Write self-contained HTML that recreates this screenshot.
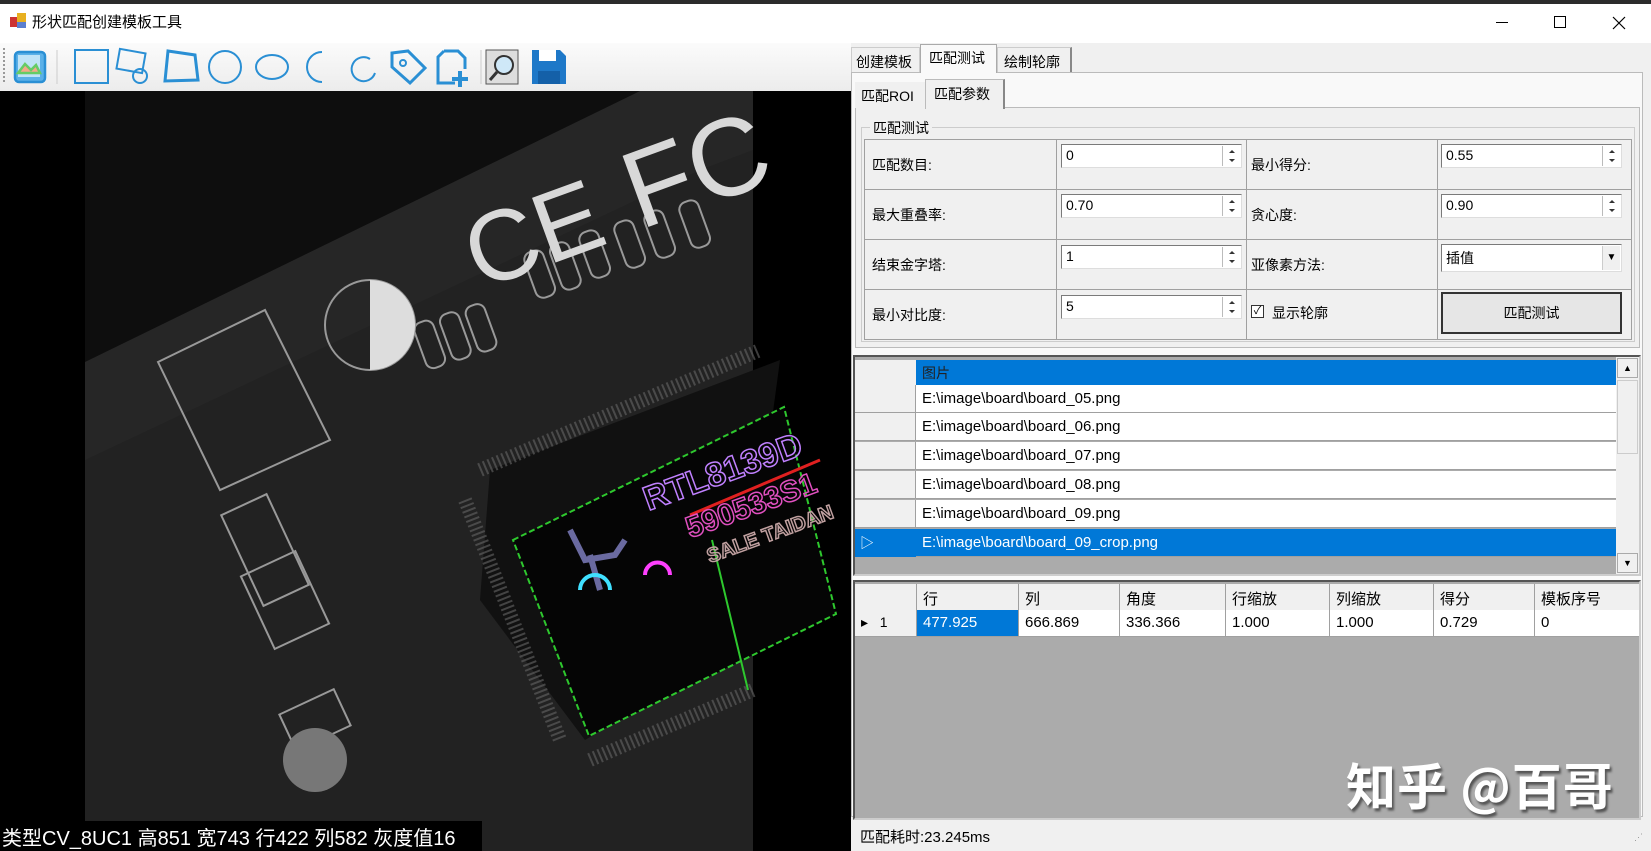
<!DOCTYPE html>
<html><head><meta charset="utf-8"><style>
*{margin:0;padding:0;box-sizing:border-box}
body{width:1651px;height:851px;overflow:hidden;background:#f0f0f0;font-family:"Liberation Sans","Noto Sans CJK SC",sans-serif;font-size:14px;color:#000;position:relative}
.a{position:absolute;white-space:nowrap}
.cell{position:absolute;border:1px solid #a0a0a0;background:#f0f0f0}
.lbl{position:absolute;font-size:14px}
.inp{position:absolute;background:#fff;border:1px solid #7a7a7a;border-right-color:#ddd;border-bottom-color:#ddd;height:24px;font-size:14px;padding:2px 4px}
.spin{position:absolute;right:1px;top:1px;width:18px;height:20px;border-left:1px solid #bbb}
.spin:before,.spin:after{content:"";position:absolute;left:6px;border-left:3px solid transparent;border-right:3px solid transparent}
.spin:before{top:4px;border-bottom:3px solid #333}
.spin:after{bottom:4px;border-top:3px solid #333}
.row{position:absolute;left:916px;width:700px;height:28px;background:#fff;border-bottom:1px solid #a0a0a0;padding:5px 6px;font-size:15px}
.rh{position:absolute;left:855px;width:61px;height:28px;background:#f0f0f0;border-bottom:1px solid #a0a0a0;border-right:1px solid #a0a0a0}
.h2{position:absolute;top:584px;height:26px;border-right:1px solid #a0a0a0;padding:4px 6px;font-size:15px;background:#f0f0f0}
.d2{position:absolute;top:610px;height:27px;border-right:1px solid #a0a0a0;padding:4px 6px;font-size:15px;background:#fff;border-bottom:1px solid #a0a0a0}
.tab{font-size:14px;white-space:nowrap;overflow:hidden}
</style></head><body>
<div class="a" style="left:0;top:0;width:1651px;height:4px;background:#2b2b2b"></div>
<div class="a" style="left:0;top:4px;width:1651px;height:39px;background:#fff"></div>
<div class="a" style="left:10px;top:13px;width:16px;height:16px">
 <div class="a" style="left:0;top:4px;width:8px;height:10px;background:#c33"></div>
 <div class="a" style="left:7px;top:0;width:9px;height:9px;background:#e8b020"></div>
 <div class="a" style="left:7px;top:9px;width:9px;height:6px;background:#5b7fd0"></div>
</div>
<div class="a" style="left:32px;top:11px;font-size:15px">形状匹配创建模板工具</div>
<div class="a" style="left:1496px;top:22px;width:12px;height:1px;background:#000"></div>
<div class="a" style="left:1554px;top:16px;width:12px;height:12px;border:1px solid #000"></div>
<svg class="a" style="left:1612px;top:16px" width="14" height="14"><path d="M1 1L13 13M13 1L1 13" stroke="#000" stroke-width="1.2"/></svg>

<div class="a" style="left:0;top:43px;width:851px;height:48px;background:linear-gradient(#fbfbfb,#ececec)"></div>
<div class="a" style="left:3px;top:48px;width:2px;height:34px;border-left:2px dotted #999"></div>
<svg class="a" style="left:0;top:43px" width="851" height="48" viewBox="0 0 851 48">
 <g fill="none" stroke="#2a8fd4" stroke-width="2.5">
  <rect x="15" y="9" width="30" height="30" rx="4" fill="#5ab0e8"/>
  <rect x="18" y="12" width="22" height="22" fill="#bfe3f7" stroke="none"/>
  <path d="M18 30 L25 21 L31 27 L36 22 L40 30 Z" fill="#f5a88a" stroke="#6c6"/>
 </g>
 <line x1="57" y1="7" x2="57" y2="41" stroke="#ccc"/>
 <g fill="none" stroke="#2a8fd4" stroke-width="2">
  <rect x="75" y="7" width="33" height="33"/>
  <rect x="118" y="8" width="26" height="20" transform="rotate(10 131 18)"/>
  <circle cx="140" cy="33" r="7"/>
  <path d="M168 8 L195 12 L198 37 L165 38 Z" stroke-width="3"/>
  <circle cx="225" cy="24" r="16"/>
  <ellipse cx="272" cy="24" rx="16" ry="12"/>
  <path d="M322 9 A15 15 0 1 0 322 39"/>
  <path d="M370 16 A12 12 0 1 0 375 30"/>
  <path d="M392 10 L408 8 L425 25 L410 40 L392 24 Z" stroke-width="3"/>
  <circle cx="403" cy="20" r="3"/>
  <path d="M444 8 L458 8 L465 15 L465 26 M444 8 L438 14 L438 40 L455 40" stroke-width="3"/>
  <path d="M460 28 L460 44 M452 36 L468 36" stroke-width="4"/>
 </g>
 <line x1="481" y1="7" x2="481" y2="41" stroke="#ccc"/>
 <rect x="486" y="7" width="32" height="34" fill="#ddd" stroke="#555"/>
 <circle cx="504" cy="22" r="9" fill="#cfe8f8" stroke="#333" stroke-width="2"/>
 <line x1="497" y1="29" x2="490" y2="37" stroke="#333" stroke-width="3"/>
 <path d="M532 7 L560 7 L566 13 L566 41 L532 41 Z" fill="#1e78c8"/>
 <rect x="539" y="7" width="17" height="11" fill="#fff"/>
 <rect x="538" y="28" width="22" height="13" fill="#1460a8"/>
</svg>

<svg class="a" style="left:0;top:91px" width="851" height="760" viewBox="0 91 851 760">
 <rect x="0" y="91" width="851" height="760" fill="#000"/>
 <rect x="85" y="91" width="668" height="760" fill="#0e0e0e"/>
 <polygon points="85,362 640,91 753,91 753,851 85,851" fill="#262626"/>
 <polygon points="85,460 700,170 753,150 753,851 85,851" fill="#222"/>
 <g fill="none" stroke="#999" stroke-width="2">
  <polygon points="158,362 265,310 330,440 220,490" />
  <circle cx="370" cy="325" r="45"/>
  <rect x="255" y="560" width="60" height="80" transform="rotate(-25 285 600)"/>
  <rect x="420" y="320" width="20" height="48" rx="8" transform="rotate(-20 431 345)"/>
  <rect x="445" y="312" width="20" height="48" rx="8" transform="rotate(-20 455 335)"/>
  <rect x="470" y="304" width="20" height="48" rx="8" transform="rotate(-20 480 325)"/>
  <rect x="530" y="250" width="20" height="48" rx="8" transform="rotate(-20 540 275)"/>
  <rect x="555" y="242" width="20" height="48" rx="8" transform="rotate(-20 565 265)"/>
  <rect x="585" y="230" width="20" height="48" rx="8" transform="rotate(-20 595 255)"/>
  <rect x="620" y="220" width="20" height="48" rx="8" transform="rotate(-20 630 245)"/>
  <rect x="650" y="210" width="20" height="48" rx="8" transform="rotate(-20 660 235)"/>
  <rect x="685" y="200" width="20" height="48" rx="8" transform="rotate(-20 695 225)"/>
  <rect x="285" y="700" width="60" height="40" transform="rotate(-25 315 720)"/>
  <rect x="240" y="500" width="50" height="100" transform="rotate(-25 265 550)"/>
 </g>
 <path d="M370 280 A45 45 0 0 1 370 370 Z" fill="#ddd"/>
 <circle cx="315" cy="760" r="32" fill="#777"/>
 <text x="480" y="290" font-size="100" fill="#d8d8d8" font-family="Liberation Sans" transform="rotate(-20 480 290)">CE</text>
 <text x="640" y="230" font-size="110" fill="#d8d8d8" font-family="Liberation Sans" transform="rotate(-20 640 230)">FC</text>
 <polygon points="490,470 780,360 753,560 753,640 585,740 480,600" fill="#111"/>
 <g stroke="#666" stroke-width="2">
  <path d="M480 470 L760 350" stroke-dasharray="2 3" stroke-width="14" opacity=".6"/>
  <path d="M590 760 L753 690" stroke-dasharray="2 3" stroke-width="14" opacity=".6"/>
  <path d="M465 500 L560 740" stroke-dasharray="2 3" stroke-width="14" opacity=".6"/>
 </g>
 <polygon points="513,540 784,407 836,614 589,736" fill="#050505" stroke="#2ec82e" stroke-width="2" stroke-dasharray="6 3"/>
 <line x1="690" y1="515" x2="820" y2="460" stroke="#e02020" stroke-width="3"/>
 <line x1="712" y1="540" x2="748" y2="690" stroke="#2ec82e" stroke-width="2"/>
 <g font-family="Liberation Sans" font-weight="bold" transform="rotate(-20 680 510)">
  <text x="650" y="500" font-size="34" fill="none" stroke="#c080ff" stroke-width="1.5">RTL8139D</text>
  <text x="680" y="540" font-size="30" fill="none" stroke="#e050c0" stroke-width="1.5">590533S1</text>
  <text x="690" y="570" font-size="20" fill="none" stroke="#c0a0a0" stroke-width="1.5">SALE TAIDAN</text>
 </g>
 <path d="M570 530 L585 560 L615 555 L625 540 M590 555 L600 590" stroke="#6a6aa0" stroke-width="6" fill="none"/>
 <path d="M580 590 A15 15 0 0 1 610 590" stroke="#40e0ff" stroke-width="4" fill="none"/>
 <path d="M645 575 A12 12 0 0 1 670 575" stroke="#ff40ff" stroke-width="4" fill="none"/>
 <rect x="0" y="821" width="482" height="30" fill="#000"/>
 <text x="2" y="845" font-size="20" fill="#fff" font-family="Liberation Sans, Noto Sans CJK SC, sans-serif">类型CV_8UC1 高851 宽743 行422 列582 灰度值16</text>
</svg>

<div class="a" style="left:851px;top:43px;width:800px;height:808px;background:#f0f0f0"></div>
<div class="a" style="left:851px;top:72px;width:792px;height:745px;border:1px solid #bbb;background:#f9f9f9"></div>
<div class="a tab" style="left:851px;top:47px;width:69px;height:25px;border:1px solid #ccc;border-bottom:none;background:#f0f0f0;padding:4px 4px">创建模板</div>
<div class="a tab" style="left:920px;top:44px;width:77px;height:29px;border:1px solid #aaa;border-bottom:none;background:#f9f9f9;padding:3px 8px">匹配测试</div>
<div class="a tab" style="left:997px;top:47px;width:75px;height:25px;border:1px solid #ccc;border-right:2px solid #888;border-bottom:none;background:#f0f0f0;padding:4px 6px">绘制轮廓</div>

<div class="a" style="left:855px;top:107px;width:785px;height:241px;border:1px solid #bbb;background:#f0f0f0"></div>
<div class="a tab" style="left:855px;top:82px;width:70px;height:26px;background:#f0f0f0;padding:4px 6px">匹配ROI</div>
<div class="a tab" style="left:925px;top:79px;width:80px;height:30px;border:1px solid #bbb;border-right:2px solid #888;border-bottom:none;background:#f0f0f0;padding:4px 8px">匹配参数</div>

<div class="a" style="left:861px;top:127px;width:774px;height:215px;border:1px solid #ccc"></div>
<div class="a" style="left:870px;top:118px;background:#f0f0f0;padding:0 3px;font-size:14px">匹配测试</div>
<div class="cell" style="left:864px;top:139px;width:193px;height:51px"></div>
<div class="cell" style="left:1056px;top:139px;width:191px;height:51px"></div>
<div class="cell" style="left:1246px;top:139px;width:192px;height:51px"></div>
<div class="cell" style="left:1437px;top:139px;width:195px;height:51px"></div>
<div class="cell" style="left:864px;top:189px;width:193px;height:51px"></div>
<div class="cell" style="left:1056px;top:189px;width:191px;height:51px"></div>
<div class="cell" style="left:1246px;top:189px;width:192px;height:51px"></div>
<div class="cell" style="left:1437px;top:189px;width:195px;height:51px"></div>
<div class="cell" style="left:864px;top:239px;width:193px;height:51px"></div>
<div class="cell" style="left:1056px;top:239px;width:191px;height:51px"></div>
<div class="cell" style="left:1246px;top:239px;width:192px;height:51px"></div>
<div class="cell" style="left:1437px;top:239px;width:195px;height:51px"></div>
<div class="cell" style="left:864px;top:289px;width:193px;height:51px"></div>
<div class="cell" style="left:1056px;top:289px;width:191px;height:51px"></div>
<div class="cell" style="left:1246px;top:289px;width:192px;height:51px"></div>
<div class="cell" style="left:1437px;top:289px;width:195px;height:51px"></div>
<div class="lbl" style="left:872px;top:155px">匹配数目:</div>
<div class="lbl" style="left:872px;top:205px">最大重叠率:</div>
<div class="lbl" style="left:872px;top:255px">结束金字塔:</div>
<div class="lbl" style="left:872px;top:305px">最小对比度:</div>
<div class="lbl" style="left:1251px;top:155px">最小得分:</div>
<div class="lbl" style="left:1251px;top:205px">贪心度:</div>
<div class="lbl" style="left:1251px;top:255px">亚像素方法:</div>
<div class="a" style="left:1251px;top:305px;width:13px;height:13px;border:1px solid #333;background:#fff;font-size:11px;line-height:11px;text-align:center">✓</div>
<div class="lbl" style="left:1272px;top:303px">显示轮廓</div>
<div class="inp" style="left:1061px;top:144px;width:181px">0<div class="spin"></div></div>
<div class="inp" style="left:1061px;top:194px;width:181px">0.70<div class="spin"></div></div>
<div class="inp" style="left:1061px;top:245px;width:181px">1<div class="spin"></div></div>
<div class="inp" style="left:1061px;top:295px;width:181px">5<div class="spin"></div></div>
<div class="inp" style="left:1441px;top:144px;width:181px">0.55<div class="spin"></div></div>
<div class="inp" style="left:1441px;top:194px;width:181px">0.90<div class="spin"></div></div>
<div class="inp" style="left:1441px;top:244px;width:181px;height:28px;padding-top:3px">插值<div class="a" style="right:1px;top:1px;width:18px;height:24px;background:#f0f0f0;border-left:1px solid #ccc;font-size:10px;text-align:center;line-height:24px">▼</div></div>
<div class="a" style="left:1441px;top:292px;width:181px;height:42px;border:2px solid #333;background:#e6e6e6;text-align:center;line-height:38px;font-size:14px">匹配测试</div>

<div class="a" style="left:853px;top:355px;width:788px;height:221px;border:2px solid #555;border-right-color:#ccc;border-bottom-color:#ccc;background:#ababab"></div>
<div class="a" style="left:855px;top:360px;width:61px;height:25px;background:#f0f0f0"></div>
<div class="a" style="left:916px;top:360px;width:700px;height:25px;background:#0078d7;padding:3px 6px;font-size:14px;color:#222">图片</div>
<div class="rh" style="top:385px"></div><div class="row" style="top:385px">E:\image\board\board_05.png</div>
<div class="rh" style="top:413px"></div><div class="row" style="top:413px">E:\image\board\board_06.png</div>
<div class="rh" style="top:442px"></div><div class="row" style="top:442px">E:\image\board\board_07.png</div>
<div class="rh" style="top:471px"></div><div class="row" style="top:471px">E:\image\board\board_08.png</div>
<div class="rh" style="top:500px"></div><div class="row" style="top:500px">E:\image\board\board_09.png</div>
<div class="a" style="left:855px;top:529px;width:61px;height:28px;background:#0078d7;color:#fff;padding:4px 5px;font-size:14px">▷</div>
<div class="row" style="top:529px;background:#0078d7;color:#fff">E:\image\board\board_09_crop.png</div>
<div class="a" style="left:1616px;top:357px;width:23px;height:217px;background:#f0f0f0"></div>
<div class="a" style="left:1617px;top:358px;width:21px;height:20px;background:#f0f0f0;border:1px solid #aaa;font-size:9px;text-align:center;line-height:18px">▲</div>
<div class="a" style="left:1617px;top:380px;width:21px;height:74px;background:#f0f0f0;border:1px solid #ccc"></div>
<div class="a" style="left:1617px;top:553px;width:21px;height:20px;background:#f0f0f0;border:1px solid #aaa;font-size:9px;text-align:center;line-height:18px">▼</div>

<div class="a" style="left:853px;top:580px;width:788px;height:240px;border:2px solid #555;border-right-color:#ccc;border-bottom-color:#ccc;background:#ababab"></div>
<div class="h2" style="left:855px;width:62px"></div>
<div class="h2" style="left:917px;width:102px">行</div>
<div class="h2" style="left:1019px;width:101px">列</div>
<div class="h2" style="left:1120px;width:106px">角度</div>
<div class="h2" style="left:1226px;width:104px">行缩放</div>
<div class="h2" style="left:1330px;width:104px">列缩放</div>
<div class="h2" style="left:1434px;width:101px">得分</div>
<div class="h2" style="left:1535px;width:104px;border-right:none">模板序号</div>
<div class="d2" style="left:855px;width:62px;background:#f0f0f0;font-size:14px">▸&nbsp;&nbsp;&nbsp;1</div>
<div class="d2" style="left:917px;width:102px;background:#0078d7;color:#fff">477.925</div>
<div class="d2" style="left:1019px;width:101px">666.869</div>
<div class="d2" style="left:1120px;width:106px">336.366</div>
<div class="d2" style="left:1226px;width:104px">1.000</div>
<div class="d2" style="left:1330px;width:104px">1.000</div>
<div class="d2" style="left:1434px;width:101px">0.729</div>
<div class="d2" style="left:1535px;width:104px;border-right:none">0</div>
<div class="a" style="left:1346px;top:748px;font-size:50px;font-weight:bold;color:#fff;text-shadow:2px 3px 2px #555;font-family:'Noto Sans CJK SC',sans-serif;letter-spacing:1px">知乎 @百哥</div>

<div class="a" style="left:860px;top:826px;font-size:15px">匹配耗时:23.245ms</div>
<div class="a" style="left:1634px;top:832px;font-size:9px;color:#999">⋰</div>
</body></html>
